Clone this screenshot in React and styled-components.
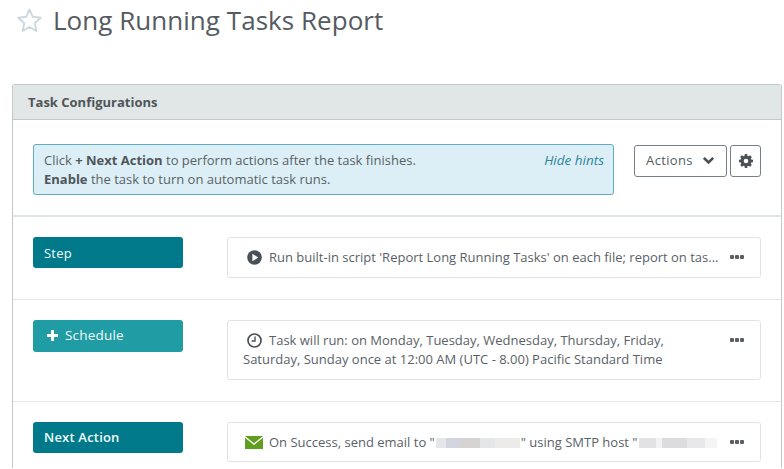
import React from 'react';
import styled, { createGlobalStyle } from 'styled-components';

const Global = createGlobalStyle`
  html, body { margin: 0; padding: 0; background: #fff; overflow: hidden; }
  body { font-family: "Open Sans", "Liberation Sans", sans-serif; color: #555; }
  * { box-sizing: border-box; }
`;
const Page = styled.div`
  width: 784px; height: 469px; overflow: hidden;
  padding: 0 2px 0 12px;
  display: flex; flex-direction: column;
`;
const TitleBar = styled.header`
  height: 84px; display: flex; align-items: flex-start; padding: 2px 0 0 4px; gap: 10px;
`;
const StarWrap = styled.div`
  padding-top: 5px; height: 32px;
`;
const Title = styled.h1`
  margin: 0; font-weight: 400; font-size: 26px; line-height: 36px; letter-spacing: .04px; color: #555b60;
`;
const Panel = styled.section`
  height: 384px; border: 1px solid #c4c8c8; border-bottom: 0; border-radius: 3px 3px 0 0;
`;
const PanelHead = styled.div`
  height: 35px; background: #e1e6e6; border-bottom: 1px solid #c4c8c8;
  padding: 0 15px; display: flex; align-items: center;
  font-size: 13px; font-weight: 700; color: #50555a;
`;
const HintRow = styled.div`
  height: 97px; padding: 24px 20px 0 20px; display: flex; align-items: flex-start;
  border-bottom: 2px solid #e1e6e6;
`;
const Hint = styled.div`
  width: 581px; height: 51px; background: #dceff7; border: 1px solid #5fadc2; border-radius: 3px;
  padding: 6px 9px 6px 10px; font-size: 13px; line-height: 19px; color: #5a5f64;
  display: flex; justify-content: space-between;
  b { font-weight: 700; color: #50555a; }
`;
const HideHints = styled.a`
  font-style: italic; color: #2f8496; font-size: 13.5px;
`;
const OutlineButton = styled.button`
  height: 32px; margin-top: 1px; background: #fff; border: 1px solid #777f88; border-radius: 3px;
  font: 400 13px "Open Sans", sans-serif; color: #555b60; letter-spacing: .35px;
  display: flex; align-items: center; justify-content: center; padding: 0;
`;
const ActionsBtn = styled(OutlineButton)`
  width: 93px; margin-left: 20px; gap: 9px; padding-bottom: 2px;
`;
const GearBtn = styled(OutlineButton)`
  width: 31px; margin-left: 3px;
`;
const Row = styled.div`
  height: ${p => p.$h}px; padding: 20px 20px 0 20px; display: flex; align-items: flex-start;
  border-bottom: ${p => p.$last ? '0' : '1px solid #e4e7e7'};
`;
const StepButton = styled.div`
  width: 150px; height: ${p => p.$h || 31}px; flex: none; background: ${p => p.$light ? '#209ca4' : '#007a8a'};
  border-radius: 3px; color: #f2fafa; font-size: ${p => p.$light ? 13.5 : 13}px; font-weight: ${p => p.$bold ? 600 : 500}; letter-spacing: .2px;
  display: flex; align-items: center; padding: 0 0 ${p => p.$pb ?? 2}px ${p => p.$light ? '14px' : '11px'}; gap: 7px;
`;
const Card = styled.div`
  margin-left: 44px; width: 534px; height: ${p => p.$h}px; flex: none; position: relative;
  border: 1px solid #e1e3e3; border-radius: 3px; padding: 10px 40px 0 ${p => p.$pad || 19}px;
  font-size: 13px; line-height: 19px; color: #5a5f68;
`;
const Line = styled.div`
  white-space: nowrap; display: flex; align-items: center; gap: ${p => p.$gap ?? 7}px;
`;
const WrappedLine = styled(Line)`
  margin-left: -4px;
`;
const Dots = styled.svg`
  position: absolute; right: 16px; top: 16px;
`;
const Redact = styled.span`
  display: inline-block; height: 10px; width: ${p => p.$w}px; margin: 0 1px; vertical-align: -1px;
  background: ${p => p.$bg};
`;

const Star = () => (
  <svg width="27" height="27" viewBox="0 0 27 27" fill="none">
    <path d="M13.5 2.500l3.300 7.300 7.900.9-5.900 5.400 1.600 7.900-6.900-4-6.900 4 1.600-7.900-5.900-5.400 7.900-.9z" stroke="#ced9df" strokeWidth="2" strokeLinejoin="round"/>
  </svg>
);
const Chevron = () => (
  <svg width="13" height="9" viewBox="0 0 13 9" fill="none">
    <path d="M1.800 1.800l4.700 4.700 4.700-4.700" stroke="#4a4f55" strokeWidth="2.600"/>
  </svg>
);
const Gear = () => (
  <svg width="14" height="14" viewBox="0 0 14 14">
    <path fill="#4b5056" fillRule="evenodd" d="M5.800 0h2.400l.3 1.900 1 .4L11.100 1.200l1.700 1.700-1.100 1.600.4 1 1.900.3v2.400l-1.900.3-.4 1 1.100 1.600-1.700 1.700-1.600-1.100-1 .4-.3 1.900H5.800l-.3-1.900-1-.4-1.600 1.100-1.700-1.700 1.100-1.600-.4-1L0 8.200V5.800l1.900-.3.4-1-1.100-1.600 1.700-1.700 1.600 1.100 1-.4zM7 4.700a2.300 2.300 0 100 4.600 2.300 2.300 0 000-4.600z"/>
  </svg>
);
const Play = () => (
  <svg width="15" height="15" viewBox="0 0 15 15">
    <circle cx="7.500" cy="7.500" r="7.300" fill="#4b5056"/>
    <path d="M5.400 3.800l5.800 3.700-5.800 3.700z" fill="#fff"/>
  </svg>
);
const Clock = () => (
  <svg width="15" height="15" viewBox="0 0 15 15" fill="none">
    <circle cx="7.500" cy="7.500" r="6.500" stroke="#4b5056" strokeWidth="1.700"/>
    <path d="M8 3.600v4.400H4.600" stroke="#4b5056" strokeWidth="1.400"/>
  </svg>
);
const Mail = () => (
  <svg width="18" height="13" viewBox="0 0 18 13">
    <path d="M0 0h18L9 7.300z" fill="#5f9e1e"/>
    <path d="M0 1.800l9 7.200 9-7.200V13H0z" fill="#5f9e1e"/>
  </svg>
);
const More = () => (
  <Dots width="14" height="6" viewBox="0 0 14 6">
    <rect x="0" y="1" width="4" height="4" rx="1" fill="#5a5f64"/>
    <rect x="5" y="1" width="4" height="4" rx="1" fill="#5a5f64"/>
    <rect x="10" y="1" width="4" height="4" rx="1" fill="#5a5f64"/>
  </Dots>
);
const Plus = () => (
  <svg width="11" height="11" viewBox="0 0 11 11">
    <path d="M4 0h3v4h4v3H7v4H4V7H0V4h4z" fill="#fff"/>
  </svg>
);

export default function App() {
  return (
    <Page>
      <Global />
      <TitleBar>
        <StarWrap><Star /></StarWrap>
        <Title>Long Running Tasks Report</Title>
      </TitleBar>
      <Panel>
        <PanelHead>Task Configurations</PanelHead>
        <HintRow>
          <Hint>
            <div>
              Click <b>+ Next Action</b> to perform actions after the task finishes.<br />
              <b>Enable</b> the task to turn on automatic task runs.
            </div>
            <HideHints>Hide hints</HideHints>
          </Hint>
          <ActionsBtn>Actions <Chevron /></ActionsBtn>
          <GearBtn><Gear /></GearBtn>
        </HintRow>
        <Row $h={83}>
          <StepButton $pb={0}>Step</StepButton>
          <Card $h={41}>
            <Line><Play />Run built-in script 'Report Long Running Tasks' on each file; report on tas...</Line>
            <More />
          </Card>
        </Row>
        <Row $h={102}>
          <StepButton $light $h={32}><Plus />Schedule</StepButton>
          <Card $h={60}>
            <Line><Clock />Task will run: on Monday, Tuesday, Wednesday, Thursday, Friday,</Line>
            <WrappedLine>Saturday, Sunday once at 12:00 AM (UTC - 8.00) Pacific Standard Time</WrappedLine>
            <More />
          </Card>
        </Row>
        <Row $h={67} $last>
          <StepButton $bold>Next Action</StepButton>
          <Card $h={40} $pad={17}>
            <Line $gap={6}>
              <Mail />
              <span>
                On Success, send email to "
                <Redact $w={84} $bg="linear-gradient(90deg,#e4e6ea 0 12%,#d2d5dd 12% 30%,#d6d3d2 30% 52%,#e4e6ea 52% 70%,#ecebe9 70% 100%)" />
                " using SMTP host "
                <Redact $w={78} $bg="linear-gradient(90deg,#e2e2e4 0 22%,#f2f2f2 22% 30%,#dcdcdf 30% 62%,#e8e8ea 62% 85%,#f4f4f4 85% 100%)" />
              </span>
            </Line>
            <More />
          </Card>
        </Row>
      </Panel>
    </Page>
  );
}
